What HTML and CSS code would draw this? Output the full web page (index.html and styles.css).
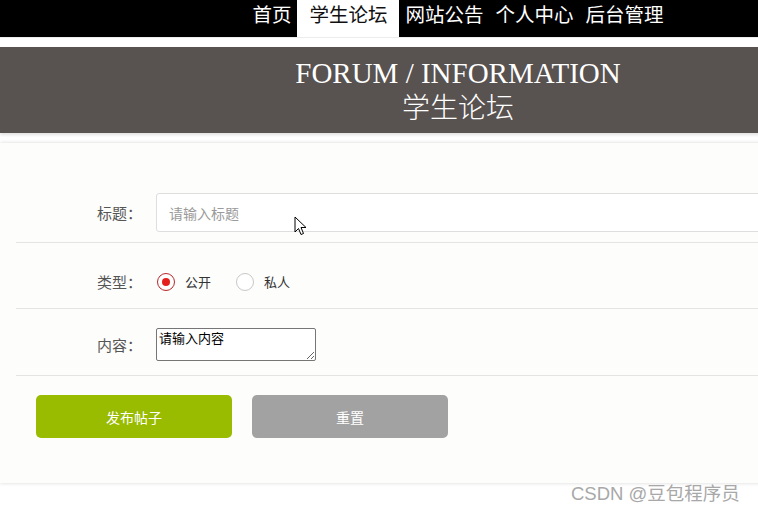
FILE: index.html
```html
<!DOCTYPE html>
<html lang="zh-CN">
<head>
<meta charset="utf-8">
<title>学生论坛</title>
<link rel="stylesheet" href="styles.css">
</head>
<body>
<div class="viewport">
<div class="page">
  <header class="topbar">
    <nav class="nav">
      <a class="nav-item">首页</a>
      <a class="nav-item active">学生论坛</a>
      <a class="nav-item">网站公告</a>
      <a class="nav-item">个人中心</a>
      <a class="nav-item">后台管理</a>
    </nav>
  </header>
  <section class="banner">
    <div class="banner-en">FORUM / INFORMATION</div>
    <div class="banner-cn">学生论坛</div>
  </section>
  <form class="card">
    <div class="row row-title">
      <label class="label">标题：</label>
      <input class="text-input" type="text" placeholder="请输入标题">
    </div>
    <div class="row row-type">
      <label class="label">类型：</label>
      <div class="radios">
        <span class="radio checked"></span><span class="radio-text">公开</span>
        <span class="radio"></span><span class="radio-text">私人</span>
      </div>
    </div>
    <div class="row row-content">
      <label class="label">内容：</label>
      <textarea class="textarea">请输入内容</textarea>
    </div>
    <div class="actions">
      <button type="button" class="btn btn-primary">发布帖子</button>
      <button type="button" class="btn btn-reset">重置</button>
    </div>
  </form>
</div>
</div>
<svg class="cursor" width="14" height="20" viewBox="0 0 14 20"><path d="M1 1 L1 16 L4.5 12.5 L7 18.5 L9.5 17.5 L7 11.5 L12 11.5 Z" fill="#fff" stroke="#000" stroke-width="1" stroke-linejoin="round"/></svg>
<div class="watermark">CSDN @豆包程序员</div>
</body>
</html>
```

FILE: styles.css
```css
html, body {
  margin: 0;
  padding: 0;
  overflow: hidden;
  background: #ffffff;
}
body {
  width: 758px;
  height: 512px;
  position: relative;
  font-family: "Noto Sans CJK SC", "Noto Sans", sans-serif;
}
.viewport {
  width: 758px;
  height: 512px;
  overflow: hidden;
}
.page {
  width: 916px;
}
.topbar {
  background: #000;
  height: 37px;
  border-bottom: 1px solid #ececec;
}
.nav {
  display: flex;
  justify-content: center;
  height: 37px;
}
.nav-item {
  display: block;
  color: #fff;
  font-size: 19.5px;
  line-height: 27px;
  padding: 0 6px;
  height: 37px;
  box-sizing: border-box;
  text-decoration: none;
}
.nav-item.active {
  background: #fff;
  color: #111;
  padding: 0 12px;
}
.banner {
  margin-top: 9px;
  height: 86px;
  box-sizing: border-box;
  padding-top: 10px;
  background: #585250;
  color: #fff;
  text-align: center;
  box-shadow: 0 2px 3px rgba(0,0,0,0.12);
}
.banner-en {
  font-family: "Liberation Serif", "Times New Roman", serif;
  font-size: 29px;
  line-height: 33px;
}
.banner-cn {
  font-family: "Noto Sans CJK SC", sans-serif;
  font-weight: 300;
  font-size: 28px;
  line-height: 33px;
}
.card {
  margin-top: 10px;
  background: #fdfdfc;
  box-shadow: 0 0 4px rgba(0,0,0,0.16);
  padding-top: 40px;
  padding-bottom: 45px;
  display: block;
}
.row {
  display: flex;
  align-items: center;
  margin-left: 16px;
  border-bottom: 1px solid #e4e4e4;
}
.row-title { padding: 10px 0; }
.row-type { padding: 29px 0 16px; }
.row-content { padding: 19px 0 14px; }
.label {
  width: 140px;
  box-sizing: border-box;
  padding-right: 14px;
  text-align: right;
  font-size: 15px;
  line-height: 20px;
  color: #555;
  flex: none;
}
.text-input {
  flex: 1;
  height: 39px;
  box-sizing: border-box;
  border: 1px solid #dedede;
  border-radius: 3px;
  padding: 0 12px;
  font-family: inherit;
  font-size: 14px;
  color: #333;
  background: #fff;
  outline: none;
}
.text-input::placeholder {
  color: #9a9a9a;
}
.radios {
  display: flex;
  align-items: center;
  height: 20px;
}
.radio {
  width: 18px;
  height: 18px;
  box-sizing: border-box;
  border: 1px solid #c8c8c8;
  border-radius: 50%;
  background: #fff;
  position: relative;
  margin-left: 1px;
}
.radio.checked {
  border: 1.5px solid #b8262a;
}
.radio.checked::after {
  content: "";
  position: absolute;
  left: 50%;
  top: 50%;
  width: 8px;
  height: 8px;
  margin: -4px 0 0 -4px;
  border-radius: 50%;
  background: #e3201c;
}
.radio-text {
  font-size: 13px;
  line-height: 20px;
  color: #333;
  margin-left: 10px;
  margin-right: 24px;
}
.textarea {
  width: 160px;
  height: 33px;
  box-sizing: border-box;
  border: 1px solid #767676;
  border-radius: 2px;
  padding: 1px 2px;
  font-family: inherit;
  font-size: 13px;
  line-height: 16px;
  color: #000;
  background: #fff;
  resize: both;
  outline: none;
  margin: 0;
  display: block;
}
.actions {
  display: flex;
  gap: 20px;
  padding: 19px 0 0 36px;
}
.btn {
  width: 196px;
  height: 43px;
  border: none;
  border-radius: 5px;
  color: #fff;
  font-family: inherit;
  font-size: 14px;
  cursor: pointer;
}
.btn-primary { background: #99bb00; }
.btn-reset { background: #a2a2a2; }
.cursor {
  position: absolute;
  left: 294px;
  top: 216px;
}
.watermark {
  position: absolute;
  left: 571px;
  top: 479px;
  font-family: "Liberation Sans", "Noto Sans CJK SC", sans-serif;
  font-size: 18.5px;
  color: #a8a8a8;
  text-shadow: 0 0 1px #fff;
}
```
